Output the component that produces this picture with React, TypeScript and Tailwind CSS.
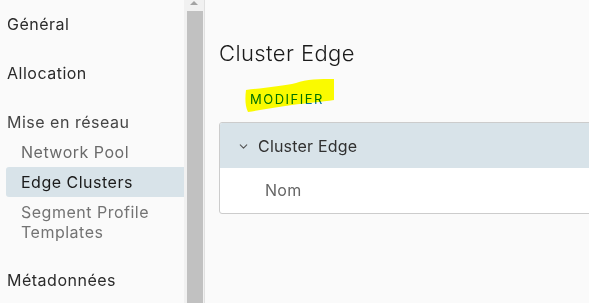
import { ChevronDown } from 'lucide-react'

const font = { fontFamily: 'Inter, "Open Sans", sans-serif' }

export default function App() {
  return (
    <div className="flex h-[303px] w-[589px] overflow-hidden bg-[#fafafa] text-[#2b2b2b]" style={font}>
      <aside className="w-[184px] shrink-0 bg-[#fafafa] pt-[12px] text-[16px] tracking-[0.5px]">
        <div className="h-[24px] pl-[7px] leading-[24px]">Général</div>
        <div className="mt-[25px] h-[24px] pl-[7px] leading-[24px]">Allocation</div>
        <div className="mt-[25px] h-[24px] pl-[7px] leading-[24px] text-[#454545]">Mise en réseau</div>
        <div className="mt-[6px] h-[24px] pl-[21px] leading-[24px] text-[#6a6a6a]">Network Pool</div>
        <div className="ml-[6px] mt-[3px] h-[30px] rounded-l-[3px] bg-[#d8e3e9] pl-[15px] leading-[30px] text-[#1b1b1b]">
          Edge Clusters
        </div>
        <div className="mt-[5px] pl-[21px] leading-[20px] text-[#737373]">
          Segment Profile
          <br />
          Templates
        </div>
        <div className="mt-[26px] h-[24px] pl-[7px] leading-[24px]">Métadonnées</div>
      </aside>

      <div className="relative w-[20px] shrink-0 bg-[#f1f1f1]">
        <svg className="absolute left-[6px] top-[1px]" width="8" height="4" viewBox="0 0 8 4">
          <path d="M4 0 L8 4 L0 4 Z" fill="#a3a3a3" />
        </svg>
        <div className="absolute bottom-0 left-[3px] top-[11px] w-[16px] bg-[#c1c1c1]" />
      </div>
      <div className="w-[2px] shrink-0 border-l border-[#e0e0e0] bg-[#fafafa]" />

      <main className="flex-1 pl-[13px] pt-[40px]">
        <h1 className="text-[22px] font-light leading-[26px] tracking-[0.4px] text-[#1b1b1b]">Cluster Edge</h1>
        <div className="relative mt-[20px] h-[16px] w-fit pl-[31px]">
          <span className="text-[13px] leading-[16px] tracking-[1.5px] text-[#0072a3]">MODIFIER</span>
          <svg
            className="absolute left-[25px] top-[-8px] mix-blend-multiply"
            width="94"
            height="36"
            viewBox="0 0 94 36"
          >
            <path
              d="M2 12 C18 10 40 8 52 5 C62 1 76 1 90 1 L90 22 C78 24 62 25 48 27 C32 29 18 32 4 34 C1 28 1 20 2 12 Z"
              fill="#ffff00"
            />
          </svg>
        </div>
        <div className="mt-[20px] w-[400px] overflow-hidden rounded-[3px] border border-[#cccccc] bg-white">
          <div className="flex h-[45px] items-center bg-[#d8e3e9] pl-[17px]">
            <ChevronDown className="mt-[2px] size-[13px] text-[#555]" strokeWidth={2} />
            <span className="ml-[8px] text-[16px] tracking-[0.2px] text-[#313131]">Cluster Edge</span>
          </div>
          <div className="h-[45px] pl-[45px] text-[16px] leading-[44px] tracking-[0.3px] text-[#666]">Nom</div>
        </div>
      </main>
    </div>
  )
}
